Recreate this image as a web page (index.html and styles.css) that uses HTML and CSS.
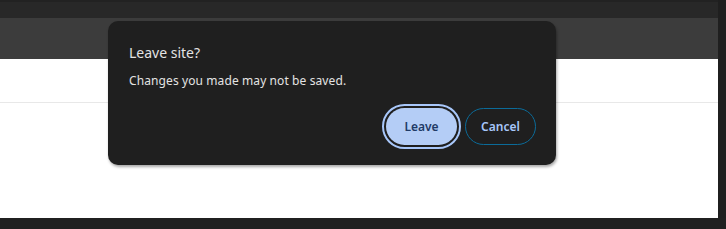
FILE: index.html
```html
<!DOCTYPE html>
<html lang="en">
<head>
    <meta charset="UTF-8">
    <meta name="viewport" content="width=device-width, initial-scale=1.0">
    <title>Leave site?</title>
    <link rel="stylesheet" href="styles.css">
</head>
<body>
    <div class="window">
        <div class="main">
            <div class="titlebar"></div>
            <div class="toolbar"></div>
            <div class="page">
                <div class="page-header"></div>
            </div>
        </div>
        <div class="side"></div>
    </div>
    <div class="bottom"></div>

    <div class="dialog" role="dialog">
        <h1 class="dialog-title">Leave site?</h1>
        <p class="dialog-text">Changes you made may not be saved.</p>
        <div class="dialog-buttons">
            <button class="btn btn-primary">Leave</button>
            <button class="btn btn-secondary">Cancel</button>
        </div>
    </div>
</body>
</html>
```

FILE: styles.css
```css
html, body {
    margin: 0;
    padding: 0;
}

body {
    font-family: "Noto Sans", "Open Sans", sans-serif;
    background-color: #202020;
    width: 726px;
    height: 229px;
    overflow: hidden;
    position: relative;
}

.window {
    display: flex;
    height: 218px;
}

.main {
    flex: 1;
    display: flex;
    flex-direction: column;
}

.side {
    width: 8px;
    background-color: #1f1f1f;
}

.titlebar {
    height: 16px;
    background-color: #282828;
    border-top: 2px solid #222;
}

.toolbar {
    height: 41px;
    background-color: #3c3c3c;
}

.page {
    flex: 1;
    background-color: #fff;
}

.page-header {
    height: 43px;
    border-bottom: 1px solid #e8e8e8;
}

.bottom {
    height: 11px;
    background-color: #202020;
}

.dialog {
    position: absolute;
    top: 21px;
    left: 108px;
    width: 448px;
    height: 144px;
    box-sizing: border-box;
    padding: 22px 20px 20px 21px;
    background-color: #1f1f1f;
    border-radius: 10px;
    box-shadow: 1px 2px 3px rgba(0, 0, 0, 0.35);
    color: #e3e3e3;
    display: flex;
    flex-direction: column;
}

.dialog-title {
    margin: 0;
    font-size: 14px;
    font-weight: normal;
    line-height: 20px;
}

.dialog-text {
    margin: 10px 0 0;
    font-size: 12px;
    letter-spacing: 0.1px;
    line-height: 16px;
    color: #e3e3e3;
}

.dialog-buttons {
    margin-top: auto;
    display: flex;
    justify-content: flex-end;
    gap: 8px;
}

.btn {
    font-family: inherit;
    font-size: 12px;
    font-weight: 600;
    width: 71px;
    height: 37px;
    border-radius: 19px;
    cursor: pointer;
}

.btn-primary {
    background-color: #b4cdf6;
    color: #1f3a66;
    border: none;
    outline: 2px solid #a8c7fa;
    outline-offset: 2px;
}

.btn-secondary {
    background-color: transparent;
    color: #a8c7fa;
    border: 1px solid #0b6b99;
}
```
